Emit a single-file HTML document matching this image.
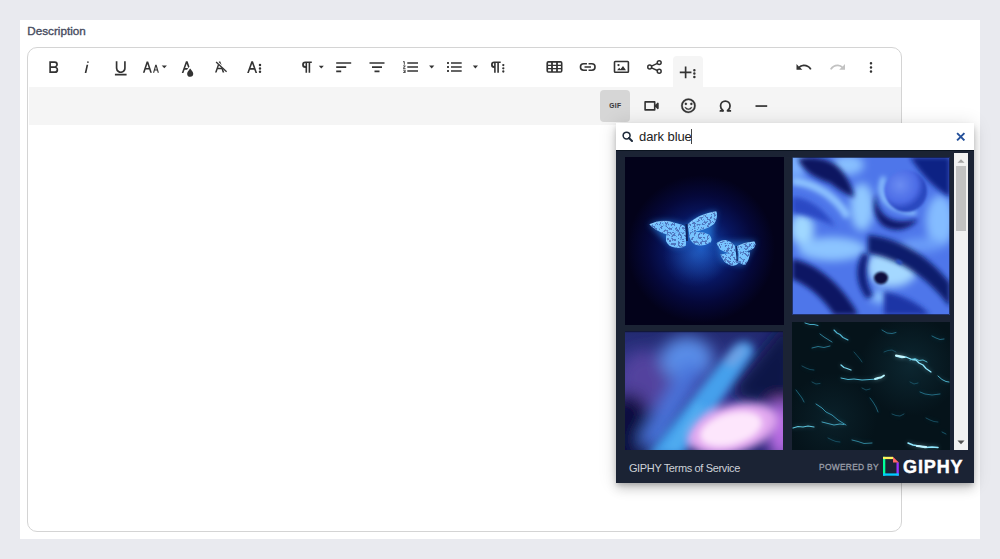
<!DOCTYPE html>
<html><head><meta charset="utf-8">
<style>
html,body{margin:0;padding:0;}
body{width:1000px;height:559px;background:#e9eaef;position:relative;overflow:hidden;font-family:"Liberation Sans",sans-serif;}
.abs{position:absolute;}
#card{left:20px;top:20px;width:960px;height:519px;background:#fff;}
#label{left:27.3px;top:24.3px;font-size:11.7px;font-weight:normal;color:#474c60;letter-spacing:0px;line-height:14px;-webkit-text-stroke:0.35px #474c60;}
#editor{left:27px;top:47px;width:873px;height:483px;border:1px solid #d4d4d4;border-radius:10px;background:#fff;}
#row2{left:29px;top:87px;width:872px;height:38px;background:#f5f5f5;}
#plusbg{left:673px;top:56px;width:30px;height:31px;background:#f5f5f5;border-radius:4px 4px 0 0;}
#gifbg{left:600px;top:90px;width:30px;height:32px;background:#d6d6d6;border-radius:4px;}
#popup{left:616px;top:123px;width:358px;height:360px;background:#1b2334;box-shadow:0 3px 5px -1px rgba(0,0,0,.2),0 6px 10px 0 rgba(0,0,0,.14),0 1px 18px 0 rgba(0,0,0,.12);overflow:hidden;}
#search{left:0;top:0;width:358px;height:27px;background:#fff;border-bottom:1px solid #0b1420;}
#q{left:23px;top:6px;font-size:13px;color:#222;line-height:16px;letter-spacing:-0.08px;}
#caret{left:75px;top:6px;width:1px;height:14.5px;background:#444;}
.img{position:absolute;overflow:hidden;}
#sb{left:338px;top:30px;width:14px;height:297px;background:#f1f1f1;}
#thumb{left:2px;top:13px;width:10px;height:65px;background:#c1c1c1;}
#terms{left:12.9px;top:337.6px;font-size:11px;color:#cdd1d8;letter-spacing:-0.35px;line-height:14px;}
#powered{left:203px;top:339px;font-size:8.4px;font-weight:normal;color:#9a9ea8;letter-spacing:0.3px;line-height:10px;-webkit-text-stroke:0.3px #9a9ea8;}
#giphy{left:287px;top:334px;font-size:18px;font-weight:bold;color:#fff;letter-spacing:0.9px;line-height:20px;-webkit-text-stroke:0.45px #fff;}
</style></head>
<body>
<div id="card" class="abs"></div>
<div id="label" class="abs">Description</div>
<div id="editor" class="abs"></div>
<div id="row2" class="abs"></div>
<div id="plusbg" class="abs"></div>
<div id="gifbg" class="abs"></div>

<svg class="abs" style="left:0;top:0" width="1000" height="559" viewBox="0 0 1000 559">
<g fill="#333">
 <!-- Bold -->
 <g transform="translate(43.75,57.2) scale(0.8333)"><path d="M15.25,11.8h0A3.68,3.68,0,0,0,17,9a3.930,3.930,0,0,0-3.86-4H6.65V19h7a3.740,3.740,0,0,0,3.7-3.78V15.1A3.640,3.640,0,0,0,15.25,11.8ZM8.65,7h4.2a2.090,2.090,0,0,1,2,1.3,2.090,2.090,0,0,1-1.37,2.61,2.230,2.230,0,0,1-.63.09H8.65Zm4.6,10H8.65V13h4.6a2.090,2.090,0,0,1,2,1.3,2.090,2.090,0,0,1-1.370,2.61A2.230,2.230,0,0,1,13.25,17Z"/></g>
 <!-- Italic -->
 <g transform="translate(76.75,57.2) scale(0.8333)"><path d="M11.76,9h2l-2.2,10h-2Zm1.68-4a1,1,0,1,0,1,1,1,1,0,0,0-1-1Z"/></g>
 <!-- Underline -->
 <g transform="translate(110.75,57.2) scale(0.8333)"><path d="M19,20v2H5V20Zm-3-6.785a4,4,0,0,1-5.74,3.4A3.750,3.750,0,0,1,8,13.085V5.005H6v8.21a6,6,0,0,0,8,5.44,5.851,5.851,0,0,0,4-5.65v-8H16Z"/></g>
 <!-- Font size -->
 <path fill-rule="evenodd" d="M142.9,72.7L146.6,61.6H148.2L151.9,72.7H150.2L149.2,69.5H145.6L144.6,72.7Z M146.1,68.0H148.7L147.4,63.9Z M153.0,72.7L155.3,64.7H156.6L158.9,72.7H157.7L157.1,70.6H154.8L154.2,72.7Z M155.15,69.5H156.75L155.95,66.6Z"/>
 <path d="M161.7,65.4h5.2l-2.6,2.8Z"/>
 <!-- Text color -->
 <g transform="translate(177.5,57.2) scale(0.8333)"><path d="M15.2,13.494s-3.6,3.9-3.6,6.3a3.650,3.650,0,0,0,7.3.1v-.1C18.9,17.394,15.2,13.494,15.2,13.494Zm-1.47-1.357.669-.724L12.1,5h-2l-5,14h2l1.43-4h2.943c.275-.475.562-.9.8-1.228ZM9.2,13l1.86-5.2L12.9,13Z"/></g>
 <!-- Clear formatting -->
 <path fill-rule="evenodd" d="M215.0,72.6L218.9,61.4H220.3L224.3,72.6H222.6L221.6,69.3H217.7L216.6,72.6Z M218.2,67.8H221.1L219.65,63.4Z"/>
 <g fill="none">
  <path d="M215.9,60.9L227.9,72.0" stroke="#fff" stroke-width="2.0"/>
  <path d="M216.1,62.0L226.6,71.7" stroke="#333" stroke-width="1.3"/>
 </g>
 <!-- Text more -->
 <g transform="translate(244.2,57.2) scale(0.8333)"><path d="M13.55,19h2l-5-14h-2l-5,14h2l1.4-4h5.1Zm-5.9-6,1.9-5.2,1.9,5.2Zm12.8,4.5a1.5,1.5,0,1,1-1.5-1.5A1.5,1.5,0,0,1,20.45,17.5Zm0-4a1.5,1.5,0,1,1-1.5-1.5A1.5,1.5,0,0,1,20.45,13.5Zm0-4A1.5,1.5,0,1,1,18.95,8,1.5,1.5,0,0,1,20.45,9.5Z"/></g>
 <!-- Paragraph format -->
 <path fill-rule="evenodd" d="M305.3,61.5H311.8V62.9H310.2V72.7H308.6V62.9H307.1V72.7H305.5V67.9H305.3A3.2,3.2 0 0 1 305.3,61.5Z M305.5,62.9H305.3A1.4,1.5 0 0 0 305.3,65.9H305.5Z"/>
 <path d="M318.8,65.7h5l-2.5,2.7Z"/>
 <!-- Align left -->
 <g transform="translate(333.7,57.2) scale(0.8333)"><path d="M3,18h6v-2H3V18z M3,11v2h12v-2H3z M3,6v2h18V6H3z"/></g>
 <!-- Align center -->
 <g transform="translate(367.0,57.2) scale(0.8333)"><path d="M9,18h6v-2H9V18z M6,11v2h12v-2H6z M3,6v2h18V6H3z"/></g>
 <!-- Ordered list -->
 <g transform="translate(400.95,57.2) scale(0.8333)"><path d="M2.5,16h2v.5h-1v1h1V18h-2v1h3V15h-3Zm1-7h1V5h-2V6h1Zm-1,2H4.3L2.5,13.1V14h3V13H3.7l1.8-2.1V10h-3Z"/></g>
 <path d="M407.3,62.2h10.7v1.65h-10.7Z M407.3,66.2h10.7v1.65h-10.7Z M407.3,70.2h10.7v1.65h-10.7Z"/>
 <path d="M429.1,65.6h5.2l-2.6,2.8Z"/>
 <!-- Unordered list -->
 <path d="M447.1,62.1h1.8v1.8h-1.8Z M447.1,66.1h1.8v1.8h-1.8Z M447.1,70.1h1.8v1.8h-1.8Z M451.0,62.2h10.7v1.65h-10.7Z M451.0,66.2h10.7v1.65h-10.7Z M451.0,70.2h10.7v1.65h-10.7Z"/>
 <path d="M472.8,65.6h5.2l-2.6,2.8Z"/>
 <!-- Paragraph more -->
 <path fill-rule="evenodd" d="M494.1,61.5H500.7V62.9H498.9V72.7H497.3V62.9H495.7V72.7H494.1V67.9A3.1,3.2 0 0 1 494.1,61.5Z M494.1,62.9A1.35,1.5 0 0 0 494.1,65.9Z"/>
 <circle cx="503.3" cy="65.1" r="1.15"/><circle cx="503.3" cy="68.3" r="1.15"/><circle cx="503.3" cy="71.5" r="1.15"/>
 <!-- Table -->
 <path fill-rule="evenodd" d="M548.4,61.1h12.1a2,2 0 0 1 2,2v7.7a2,2 0 0 1 -2,2h-12.1a2,2 0 0 1 -2,-2v-7.7a2,2 0 0 1 2,-2Z M548.1,62.8H551.1V64.8H548.1Z M552.9,62.8H556.1V64.8H552.9Z M557.9,62.8H560.9V64.8H557.9Z M548.1,65.9H551.1V67.9H548.1Z M552.9,65.9H556.1V67.9H552.9Z M557.9,65.9H560.9V67.9H557.9Z M548.1,69.2H551.1V71.2H548.1Z M552.9,69.2H556.1V71.2H552.9Z M557.9,69.2H560.9V71.2H557.9Z"/>
 <!-- Link -->
 <g transform="translate(578.03,57.3) scale(0.81)"><path d="M11,17H7A5,5,0,0,1,7,7h4V9H7a3,3,0,0,0,0,6h4ZM17,7H13V9h4a3,3,0,0,1,0,6H13v2h4A5,5,0,0,0,17,7Zm-1,4H8v2h8Z"/></g>
 <!-- Image -->
 <path fill-rule="evenodd" d="M615.3,60.7h12.3a1.6,1.6 0 0 1 1.6,1.6v9.1a1.6,1.6 0 0 1 -1.6,1.6h-12.3a1.6,1.6 0 0 1 -1.6,-1.6v-9.1a1.6,1.6 0 0 1 1.6,-1.6Z M615.3,62.3v9.2h12.3v-9.2Z"/>
 <circle cx="618.5" cy="65.1" r="1.15"/>
 <path d="M617.1,70.2L619.2,67.7L620.5,69.2L623.0,66.1L626.0,70.2Z"/>
 <!-- Share -->
 <g fill="none" stroke="#333" stroke-width="1.5">
  <circle cx="649.7" cy="67.0" r="1.95"/>
  <circle cx="659.2" cy="62.6" r="1.95"/>
  <circle cx="659.2" cy="71.3" r="1.95"/>
  <path d="M651.5,66.1L657.4,63.4M651.5,67.9L657.4,70.5"/>
 </g>
 <!-- Insert more -->
 <g transform="translate(677.7,62.3) scale(0.8333)"><path d="M16.5,13h-6v6h-2V13h-6V11h6V5h2v6h6Zm5,4.5A1.5,1.5,0,1,1,20,16,1.5,1.5,0,0,1,21.5,17.5Zm0-4A1.5,1.5,0,1,1,20,12,1.5,1.5,0,0,1,21.5,13.5Zm0-4A1.5,1.5,0,1,1,20,8,1.5,1.5,0,0,1,21.5,9.5Z"/></g>
 <!-- Undo -->
 <g transform="translate(794.0,56.9) scale(0.8333)"><path d="M10.4,9.4c-1.7,0.3-3.2,0.9-4.6,2L3,8.5v7h7l-2.7-2.7c3.7-2.6,8.8-1.8,11.5,1.9c0.2,0.3,0.4,0.5,0.5,0.8l1.8-0.9C18.9,10.8,14.7,8.7,10.4,9.4z"/></g>
 <!-- Redo -->
 <g transform="translate(827.5,56.9) scale(0.8333)" fill="#c2c2c2"><path d="M13.6,9.4c1.7,0.3,3.2,0.9,4.6,2L21,8.5v7h-7l2.7-2.7C13,10.1,7.9,11,5.3,14.7c-0.2,0.3-0.4,0.5-0.5,0.8L3,14.6C5.1,10.8,9.3,8.7,13.6,9.4z"/></g>
 <!-- More -->
 <g transform="translate(861.0,57.4) scale(0.8333)"><path d="M13.5,17c0,0.8-0.7,1.5-1.5,1.5s-1.5-0.7-1.5-1.5s0.7-1.5,1.5-1.5S13.5,16.2,13.5,17z M13.5,12c0,0.8-0.7,1.5-1.5,1.5s-1.5-0.7-1.5-1.5s0.7-1.5,1.5-1.5S13.5,11.2,13.5,12z M13.5,7c0,0.8-0.7,1.5-1.5,1.5S10.5,7.8,10.5,7s0.7-1.5,1.5-1.5S13.5,6.2,13.5,7z"/></g>
 <!-- GIF -->
 <text x="615.3" y="107.7" font-family="Liberation Sans" font-weight="bold" font-size="6.6" text-anchor="middle" fill="#3a3a3a" stroke="#3a3a3a" stroke-width="0.1" letter-spacing="0.4">GIF</text>
 <!-- Video -->
 <g transform="translate(641.9,96.3) scale(0.8)"><path d="M15,8v8H5V8H15m2,2.5V7a1,1,0,0,0-1-1H4A1,1,0,0,0,3,7V17a1,1,0,0,0,1,1H16a1,1,0,0,0,1-1V13.5l2.29,2.29A1,1,0,0,0,21,15.08V8.91a1,1,0,0,0-1.71-.71Z"/></g>
 <!-- Emoticons -->
 <g transform="translate(678.7,96.0) scale(0.81)"><path stroke="#333" stroke-width="0.3" d="M11.991,3A9,9,0,1,0,21,12,8.99557,8.99557,0,0,0,11.991,3ZM12,19a7,7,0,1,1,7-7A6.99808,6.99808,0,0,1,12,19Zm3.105-5.2h1.503a4.94542,4.94542,0,0,1-9.216,0H8.895a3.57808,3.57808,0,0,0,6.21,0ZM7.5,9.75A1.35,1.35,0,1,1,8.85,11.1,1.35,1.35,0,0,1,7.5,9.75Zm6.75,0A1.35,1.35,0,1,1,15.6,11.1,1.35,1.35,0,0,1,14.25,9.75Z"/></g>
 <!-- Omega -->
 <path d="M719.8,110.0h3.6v1.75h-3.9Z M727.2,110.0h3.9v1.75h-3.6Z"/>
 <path fill="none" stroke="#333" stroke-width="1.75" d="M723,111.5v-1.1c-1.55,-0.95-2.45,-2.55-2.45,-4.35c0,-2.95 2.15,-4.95 4.75,-4.95s4.75,2 4.75,4.95c0,1.8-0.9,3.4-2.45,4.35v1.1"/>
 <!-- HR -->
 <path d="M755.5,105.2h11.7v1.7h-11.7Z"/>
</g>
</svg>

<div id="popup" class="abs">
  <div id="search" class="abs">
    <svg class="abs" style="left:6px;top:8px" width="11" height="11" viewBox="0 0 11 11"><circle cx="4.6" cy="4.6" r="3.45" fill="none" stroke="#1d2a3a" stroke-width="1.55"/><path d="M7,7 L10,10" stroke="#1d2a3a" stroke-width="2" stroke-linecap="round"/></svg>
    <div id="q" class="abs">dark blue</div>
    <div id="caret" class="abs"></div>
    <svg class="abs" style="left:340.3px;top:8.6px" width="9.5" height="9.5" viewBox="0 0 9.5 9.5"><path d="M1.1,1.1 L8.4,8.4 M8.4,1.1 L1.1,8.4" stroke="#24509a" stroke-width="1.9"/></svg>
  </div>
  <!-- Image 1: butterflies -->
  <svg class="img" style="left:9px;top:34px" width="159" height="168" viewBox="0 0 159 168">
   <defs>
    <radialGradient id="g1a" cx="76" cy="92" r="74" gradientUnits="userSpaceOnUse">
     <stop offset="0" stop-color="#1650b8"/><stop offset="0.2" stop-color="#0e3290"/><stop offset="0.45" stop-color="#081660"/><stop offset="0.72" stop-color="#05083a"/><stop offset="1" stop-color="#03021a"/>
    </radialGradient>
    <radialGradient id="g1b" cx="70" cy="98" r="32" gradientUnits="userSpaceOnUse">
     <stop offset="0" stop-color="#3a7ad8" stop-opacity="0.3"/><stop offset="1" stop-color="#3a7ad8" stop-opacity="0"/>
    </radialGradient>
    <pattern id="sp1" width="4.2" height="3.6" patternUnits="userSpaceOnUse" patternTransform="rotate(28)">
     <rect width="4.2" height="3.6" fill="#7cbcff"/>
     <ellipse cx="1.4" cy="1.2" rx="1.1" ry="0.7" fill="#1f4aa8"/>
     <ellipse cx="3.4" cy="2.9" rx="0.8" ry="0.55" fill="#2a58b8"/>
    </pattern>
    <filter id="bl1" x="-20%" y="-20%" width="140%" height="140%"><feGaussianBlur stdDeviation="0.6"/></filter>
    <filter id="spots1" x="0" y="0" width="100%" height="100%">
     <feTurbulence type="fractalNoise" baseFrequency="0.45" numOctaves="2" seed="7" result="n"/>
     <feColorMatrix in="n" type="matrix" values="0 0 0 0 0.08  0 0 0 0 0.18  0 0 0 0 0.52  16 0 0 0 -8.4" result="sp"/>
     <feComposite in="sp" in2="SourceGraphic" operator="in" result="s2"/>
     <feMerge><feMergeNode in="SourceGraphic"/><feMergeNode in="s2"/></feMerge>
    </filter>
    <filter id="gl1" x="-40%" y="-40%" width="180%" height="180%"><feGaussianBlur stdDeviation="3"/></filter>
   </defs>
   <rect width="159" height="168" fill="#04031c"/>
   <rect width="159" height="168" fill="url(#g1a)"/>
   <rect width="159" height="168" fill="url(#g1b)"/>
   <g filter="url(#gl1)" fill="#2a88e8" opacity="0.65">
    <path d="M24,67 Q40,60 60,68 L62,88 Q50,94 42,86Z"/>
    <path d="M62,67 Q76,56 92,54 L86,86 Q72,90 64,82Z"/>
    <path d="M92,85 L131,84 L118,109 L96,104Z"/>
   </g>
   <g filter="url(#bl1)">
    <g fill="#78c4ff" filter="url(#spots1)">
     <path d="M24.3,67.3 Q36,62 48,65.5 Q56,67 59.5,69 L61,76 Q52,74.5 42,77.5 Q30,74 24.3,67.3Z"/>
     <path d="M41,78 Q50,74 61,76 L61,88.5 Q56,92 50,90.5 Q43,89.5 41,84Z"/>
     <path d="M62.5,67.5 Q70,60 80,57 Q88,54 91.5,54.5 Q93.5,60 89,67 Q82,73 64,76Z"/>
     <path d="M64,76 Q76,73.5 84,77.5 Q88,82 85.5,85.5 Q78,90 70,87.5 Q64,84 64,76Z"/>
     <path d="M91.6,86.5 Q96,83 101,83.2 Q107,85 110,89 L111,96 Q102,97 95,92.5Z"/>
     <path d="M95.5,97.5 Q103,95.5 111,96 Q114,101 113.5,106 Q111,109.5 106,108.5 Q98,106 95.5,97.5Z"/>
     <path d="M111,90 Q118,85.5 129.5,84.5 Q131.5,87.5 129,91 Q124,95 113.5,96Z"/>
     <path d="M113.5,96 Q120,94 125,95 Q125,102 120,108 Q115,107 113.5,104Z"/>
    </g>
    <g fill="none" stroke="#a8deff" stroke-width="0.7" opacity="0.7">
     <path d="M25,68 Q36,62 48,65.5 M63,68 Q74,58 91,55 M92,86 Q97,83 101,83.5 M111,90 Q120,85 129,85"/>
    </g>
    <path d="M60.4,67 L62.6,67 L63,84 L61,84Z" fill="#0e2460"/>
    <path d="M110.5,89 L112.2,89 L113,104 L111.6,104Z" fill="#10286a"/>
   </g>
  </svg>
  <!-- Image 2: blue swirl -->
  <svg class="img" style="left:176px;top:34px" width="158" height="158" viewBox="0 0 158 158">
   <defs>
    <filter id="bl2a" x="-50%" y="-50%" width="200%" height="200%"><feGaussianBlur stdDeviation="4.5"/></filter>
    <filter id="bl2b" x="-50%" y="-50%" width="200%" height="200%"><feGaussianBlur stdDeviation="2.6"/></filter>
    <filter id="bl2c" x="-50%" y="-50%" width="200%" height="200%"><feGaussianBlur stdDeviation="1.2"/></filter>
    <radialGradient id="ball2" cx="108" cy="28" r="24" gradientUnits="userSpaceOnUse"><stop offset="0" stop-color="#6a8cf2"/><stop offset="0.7" stop-color="#4c6ce6"/><stop offset="1" stop-color="#2a48c0"/></radialGradient>
   </defs>
   <rect width="158" height="158" fill="#4e76ea"/>
   <!-- light areas -->
   <g filter="url(#bl2a)">
    <rect x="-5" y="-5" width="18" height="26" fill="#7ab0ff"/>
    <ellipse cx="56" cy="8" rx="16" ry="10" fill="#88c0ff"/>
    <ellipse cx="10" cy="72" rx="12" ry="16" fill="#a0d8ff"/>
    <ellipse cx="70" cy="50" rx="12" ry="24" fill="#90c8ff"/>
    <ellipse cx="40" cy="92" rx="34" ry="12" fill="#8cc4ff"/>
    <ellipse cx="100" cy="110" rx="26" ry="20" fill="#a4d8ff"/>
    <ellipse cx="148" cy="64" rx="14" ry="26" fill="#84bcff"/>
    <ellipse cx="88" cy="140" rx="10" ry="6" fill="#90c8ff"/>
    <ellipse cx="130" cy="88" rx="22" ry="7" fill="#6a9cf8"/>
   </g>
   <!-- light arc band under top-left dark blob -->
   <g filter="url(#bl2b)" fill="none">
    <path d="M0,24 C24,26 44,40 56,60" stroke="#8cc2ff" stroke-width="8"/>
    <path d="M92,20 C84,38 92,52 124,56" stroke="#90c8ff" stroke-width="5"/>
   </g>
   <!-- dark shapes -->
   <g filter="url(#bl2b)">
    <path d="M6,2 C20,-2 38,2 46,10 C54,18 60,28 62,40 C54,38 46,32 38,26 C26,22 12,16 6,2Z" fill="#0a1660"/>
    <path d="M0,40 C16,40 32,52 44,70 C32,64 16,58 0,56Z" fill="#2a48c4"/>
    <path d="M118,0 L158,0 L158,40 C146,34 132,22 118,0Z" fill="#0e2084"/>
    <path d="M84,36 C84,56 98,70 126,62 C118,74 100,76 90,68 C82,60 80,48 84,36Z" fill="#0a1868"/>
    <path d="M0,102 C22,106 44,122 62,150 L66,158 L42,158 C32,142 16,128 0,122Z" fill="#0a1864"/>
    <path d="M76,78 C104,80 134,96 158,126 L158,150 C134,118 106,102 76,96Z" fill="#0a1a6c"/>
    <path d="M71,96 C62,110 64,128 75,142 L81,138 C73,126 73,110 77,98Z" fill="#0c1e78"/>
    <path d="M92,134 C110,138 128,146 138,158 L92,158Z" fill="#1a34a6"/>
   </g>
   <g filter="url(#bl2c)">
    <circle cx="114" cy="34" r="21" fill="url(#ball2)"/>
    <ellipse cx="89" cy="121" rx="7" ry="6.2" fill="#08103e"/>
    <ellipse cx="107" cy="105" rx="3.5" ry="2" fill="#2a50c0" transform="rotate(30 107 105)"/>
   </g>
   <rect x="0.4" y="0.4" width="157.2" height="157.2" fill="none" stroke="#0b1024" stroke-width="0.8" opacity="0.8"/>
  </svg>
  <!-- Image 3: light beams -->
  <svg class="img" style="left:9px;top:208px" width="158" height="119" viewBox="0 0 158 119">
   <defs>
    <filter id="bl3" x="-50%" y="-50%" width="200%" height="200%"><feGaussianBlur stdDeviation="8"/></filter>
    <filter id="bl3b" x="-50%" y="-50%" width="200%" height="200%"><feGaussianBlur stdDeviation="4.5"/></filter>
    <filter id="bl3c" x="-50%" y="-50%" width="200%" height="200%"><feGaussianBlur stdDeviation="3"/></filter>
    <linearGradient id="lg3" x1="0" y1="0" x2="0" y2="1"><stop offset="0" stop-color="#222a70"/><stop offset="0.5" stop-color="#3a3c9c"/><stop offset="1" stop-color="#1c1e6c"/></linearGradient>
   </defs>
   <rect width="158" height="119" fill="url(#lg3)"/>
   <g filter="url(#bl3)">
    <ellipse cx="20" cy="50" rx="26" ry="30" fill="#52439e"/>
    <ellipse cx="4" cy="102" rx="24" ry="40" fill="#0c0e40"/>
    <ellipse cx="62" cy="28" rx="26" ry="22" fill="#5a8ee8"/>
    <path d="M12,112 L60,30 L80,36 L36,116Z" fill="#4a74dc"/>
    <path d="M104,60 L158,-5 L170,-5 L170,70 L120,72Z" fill="#0a1446"/>
    <ellipse cx="156" cy="100" rx="14" ry="30" fill="#c070e8"/>
   </g>
   <g filter="url(#bl3b)">
    <path d="M74,60 L98,30 L104,40 L84,68Z" fill="#1e3cae" opacity="0.7"/>
    <path d="M22,125 L108,16 Q116,8 124,12 Q132,18 126,26 L58,125Z" fill="#44a0ec"/>
    <ellipse cx="108" cy="98" rx="46" ry="24" fill="#e2a8f0" transform="rotate(-16 108 98)"/>
    <path d="M98,30 L114,14 L124,18 L108,36Z" fill="#7aa4e4" opacity="0.8"/>
   </g>
   <g filter="url(#bl3c)">
    <ellipse cx="106" cy="98" rx="32" ry="16" fill="#fde6fc" transform="rotate(-16 106 98)"/>
    <path d="M40,119 L72,72 L80,76 L52,119Z" fill="#5ab8f4" opacity="0.5"/>
   </g>
   <rect x="0" y="0" width="158" height="1.2" fill="#0b1024" opacity="0.7"/>
  </svg>
  <!-- Image 4: cyan streaks -->
  <svg class="img" style="left:176px;top:199px" width="158" height="128" viewBox="0 0 158 128">
   <defs>
    <filter id="bl4" x="-40%" y="-40%" width="180%" height="180%"><feGaussianBlur stdDeviation="0.55"/></filter>
    <filter id="bl4g" x="-40%" y="-40%" width="180%" height="180%"><feGaussianBlur stdDeviation="2.2"/></filter>
    <radialGradient id="g4a" cx="118" cy="44" r="50" gradientUnits="userSpaceOnUse"><stop offset="0" stop-color="#0c2630"/><stop offset="1" stop-color="#0c2630" stop-opacity="0"/></radialGradient>
    <radialGradient id="g4b" cx="40" cy="96" r="45" gradientUnits="userSpaceOnUse"><stop offset="0" stop-color="#0a2029"/><stop offset="1" stop-color="#0a2029" stop-opacity="0"/></radialGradient>
   </defs>
   <rect width="158" height="128" fill="#05131a"/>
   <rect width="158" height="128" fill="url(#g4a)"/>
   <rect width="158" height="128" fill="url(#g4b)"/>
   <g filter="url(#bl4g)" fill="none" stroke-linecap="round" stroke-linejoin="round" opacity="0.45">
    <path d="M104,34 L110,35.5 L114,35 L120,37.5 L124,38 L127,41 L131,43 L134,46.5 L139,50" stroke="#8fe8ff" stroke-width="1.3"/>
    <path d="M104,33.5 L112,35" stroke="#c8f8ff" stroke-width="2.0"/>
    <path d="M118,38 L123,36.5 L127,38.5 L131,38 L135,40" stroke="#5ac4dc" stroke-width="0.9"/>
    <path d="M49,56 L56,57.5 L62,57 L70,58 L78,57.5 L86,57" stroke="#4fb6d0" stroke-width="1.0"/>
    <path d="M83,57 L86,56 L89,55.5 L92,53.5" stroke="#b8f6ff" stroke-width="1.9"/>
    <path d="M49,43 L52,45.5 L55,46.5 L59,48" stroke="#7ad8f0" stroke-width="1.3"/>
    <path d="M24,82 L30,86 L34,90 L40,93 L46,98 L54,103" stroke="#3a9cb8" stroke-width="0.9"/>
    <path d="M30,100 L36,101.5 L42,103 L48,102 L52,102.5" stroke="#4aaec8" stroke-width="0.9"/>
    <path d="M1,106 L6,104.5 L11,105 L16,104 L22,105" stroke="#5cc2da" stroke-width="1.2"/>
    <path d="M116,121 L121,123 L127,124 L133,125.5 L140,125 L146,125.5" stroke="#90e8ff" stroke-width="1.5"/>
    <path d="M125,124 L134,125" stroke="#c0f4ff" stroke-width="2.2"/>
    <path d="M42,8 L45,11 L48,12.5 L51,15.5 L56,18" stroke="#52b6d2" stroke-width="1.1"/>
    <path d="M28,12 L32,15 L36,17.5 L40,20" stroke="#3a98b4" stroke-width="0.8"/>
    <path d="M13,1 L18,2.5 L22,2.5 L26,3.5" stroke="#44a8c4" stroke-width="1.0"/>
    <path d="M20,26 L26,24.5 L32,25.5 L38,24" stroke="#2e8aa4" stroke-width="0.8"/>
    <path d="M90,8 L95,11 L100,11.5 L104,10.5" stroke="#2a7e98" stroke-width="0.8"/>
    <path d="M128,70 L133,72 L140,73 L148,72" stroke="#2a7e98" stroke-width="0.8"/>
    <path d="M78,76 L81,80 L84,85 L86,90" stroke="#2a7e98" stroke-width="0.7"/>
    <path d="M4,68 L7,72 L10,76 L12,80" stroke="#2a7e98" stroke-width="0.7"/>
    <path d="M60,118 L66,119.5 L72,121.5 L80,121" stroke="#3a9ab4" stroke-width="0.8"/>
    <path d="M140,14 L144,16 L148,17.5 L152,17" stroke="#2a7e98" stroke-width="0.8"/>
    <path d="M146,54 L150,57.5 L154,59.5 L157,60" stroke="#4aaec8" stroke-width="1.0"/>
    <path d="M92,30 L96,28.5 L100,28 L104,30" stroke="#1f6278" stroke-width="0.7"/>
    <path d="M62,30 L65,33.5 L68,37 L70,40" stroke="#1f6278" stroke-width="0.7"/>
    <path d="M10,44 L14,46 L18,47.5 L22,48" stroke="#1f6278" stroke-width="0.7"/>
    <path d="M100,92 L104,93.5 L108,94 L112,92" stroke="#1f6278" stroke-width="0.7"/>
    <path d="M134,96 L138,98 L142,99.5 L146,100" stroke="#1f6278" stroke-width="0.7"/>
    <path d="M36,116 L40,118 L44,119.5 L48,120" stroke="#1f6278" stroke-width="0.7"/>
    <path d="M70,66 L74,68 L78,67" stroke="#236e86" stroke-width="0.6"/>
    <path d="M118,60 L122,62 L126,61" stroke="#236e86" stroke-width="0.6"/>
    <path d="M20,60 L24,62 L28,61.5" stroke="#236e86" stroke-width="0.6"/>
    <path d="M150,110 L154,112" stroke="#2a7e98" stroke-width="0.6"/>
   </g>
   <g filter="url(#bl4)" fill="none" stroke-linecap="round" stroke-linejoin="round">
    <path d="M104,34 L110,35.5 L114,35 L120,37.5 L124,38 L127,41 L131,43 L134,46.5 L139,50" stroke="#8fe8ff" stroke-width="1.3"/>
    <path d="M104,33.5 L112,35" stroke="#c8f8ff" stroke-width="2.0"/>
    <path d="M118,38 L123,36.5 L127,38.5 L131,38 L135,40" stroke="#5ac4dc" stroke-width="0.9"/>
    <path d="M49,56 L56,57.5 L62,57 L70,58 L78,57.5 L86,57" stroke="#4fb6d0" stroke-width="1.0"/>
    <path d="M83,57 L86,56 L89,55.5 L92,53.5" stroke="#b8f6ff" stroke-width="1.9"/>
    <path d="M49,43 L52,45.5 L55,46.5 L59,48" stroke="#7ad8f0" stroke-width="1.3"/>
    <path d="M24,82 L30,86 L34,90 L40,93 L46,98 L54,103" stroke="#3a9cb8" stroke-width="0.9"/>
    <path d="M30,100 L36,101.5 L42,103 L48,102 L52,102.5" stroke="#4aaec8" stroke-width="0.9"/>
    <path d="M1,106 L6,104.5 L11,105 L16,104 L22,105" stroke="#5cc2da" stroke-width="1.2"/>
    <path d="M116,121 L121,123 L127,124 L133,125.5 L140,125 L146,125.5" stroke="#90e8ff" stroke-width="1.5"/>
    <path d="M125,124 L134,125" stroke="#c0f4ff" stroke-width="2.2"/>
    <path d="M42,8 L45,11 L48,12.5 L51,15.5 L56,18" stroke="#52b6d2" stroke-width="1.1"/>
    <path d="M28,12 L32,15 L36,17.5 L40,20" stroke="#3a98b4" stroke-width="0.8"/>
    <path d="M13,1 L18,2.5 L22,2.5 L26,3.5" stroke="#44a8c4" stroke-width="1.0"/>
    <path d="M20,26 L26,24.5 L32,25.5 L38,24" stroke="#2e8aa4" stroke-width="0.8"/>
    <path d="M90,8 L95,11 L100,11.5 L104,10.5" stroke="#2a7e98" stroke-width="0.8"/>
    <path d="M128,70 L133,72 L140,73 L148,72" stroke="#2a7e98" stroke-width="0.8"/>
    <path d="M78,76 L81,80 L84,85 L86,90" stroke="#2a7e98" stroke-width="0.7"/>
    <path d="M4,68 L7,72 L10,76 L12,80" stroke="#2a7e98" stroke-width="0.7"/>
    <path d="M60,118 L66,119.5 L72,121.5 L80,121" stroke="#3a9ab4" stroke-width="0.8"/>
    <path d="M140,14 L144,16 L148,17.5 L152,17" stroke="#2a7e98" stroke-width="0.8"/>
    <path d="M146,54 L150,57.5 L154,59.5 L157,60" stroke="#4aaec8" stroke-width="1.0"/>
    <path d="M92,30 L96,28.5 L100,28 L104,30" stroke="#1f6278" stroke-width="0.7"/>
    <path d="M62,30 L65,33.5 L68,37 L70,40" stroke="#1f6278" stroke-width="0.7"/>
    <path d="M10,44 L14,46 L18,47.5 L22,48" stroke="#1f6278" stroke-width="0.7"/>
    <path d="M100,92 L104,93.5 L108,94 L112,92" stroke="#1f6278" stroke-width="0.7"/>
    <path d="M134,96 L138,98 L142,99.5 L146,100" stroke="#1f6278" stroke-width="0.7"/>
    <path d="M36,116 L40,118 L44,119.5 L48,120" stroke="#1f6278" stroke-width="0.7"/>
    <path d="M70,66 L74,68 L78,67" stroke="#236e86" stroke-width="0.6"/>
    <path d="M118,60 L122,62 L126,61" stroke="#236e86" stroke-width="0.6"/>
    <path d="M20,60 L24,62 L28,61.5" stroke="#236e86" stroke-width="0.6"/>
    <path d="M150,110 L154,112" stroke="#2a7e98" stroke-width="0.6"/>
   </g>
  </svg>
  <div id="sb" class="abs"><div id="thumb" class="abs"></div><svg class="abs" style="left:0;top:0" width="14" height="297"><path d="M3.5,9.8L7,6.2L10.5,9.8Z" fill="#a3a3a3"/><path d="M3.5,287.6L7,291.2L10.5,287.6Z" fill="#505050"/></svg></div>
  <div id="terms" class="abs">GIPHY Terms of Service</div>
  <div id="powered" class="abs">POWERED BY</div>
  <div id="giphy" class="abs">GIPHY</div>
  <svg class="abs" style="left:0;top:0" width="358" height="360" viewBox="616 123 358 360">
   <rect x="883" y="456.8" width="2.3" height="18.9" fill="#00ff99"/>
   <rect x="883" y="456.8" width="10" height="2.3" fill="#fff35c"/>
   <rect x="896.5" y="462.3" width="2.3" height="13.4" fill="#9933ff"/>
   <rect x="883" y="473.4" width="15.8" height="2.3" fill="#00ccff"/>
   <path d="M893,456.8L898.8,462.4H893Z" fill="#ff6666"/>
  </svg>
</div>
</body></html>
